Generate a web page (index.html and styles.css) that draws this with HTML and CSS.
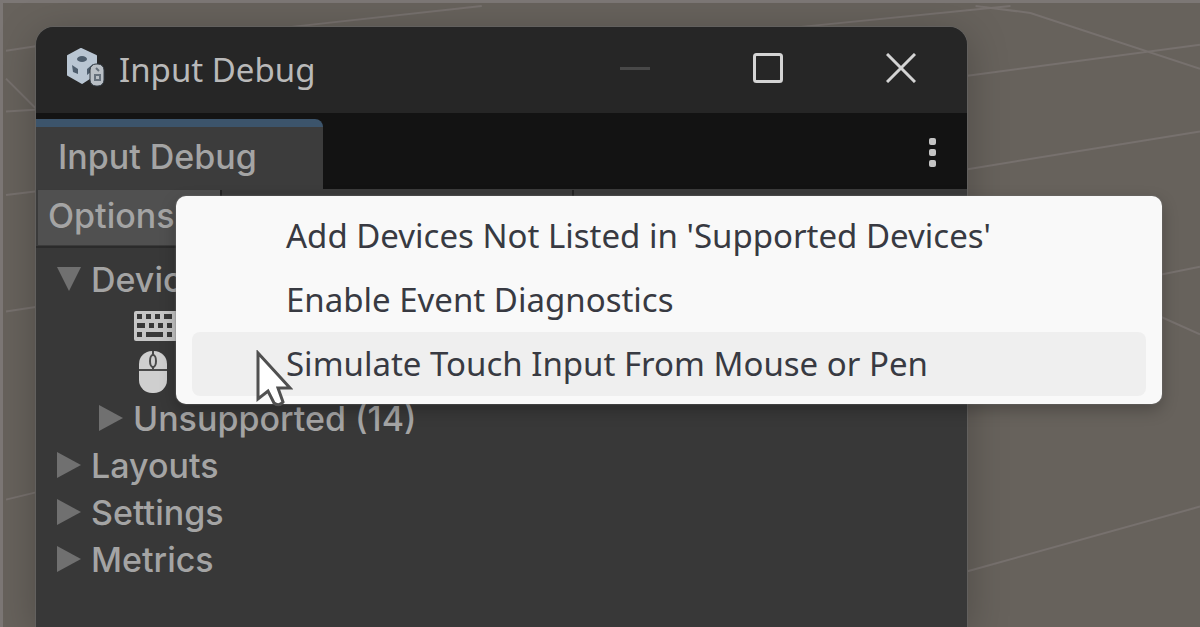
FILE: index.html
```
<!DOCTYPE html>
<html lang="en">
<head>
    <meta charset="UTF-8">
    <meta name="viewport" content="width=device-width, initial-scale=1.0">
    <title>Input Debug</title>
    <link rel="stylesheet" href="styles.css">
</head>
<body>
    <!-- scene grid behind the window -->
    <svg class="scene" viewBox="0 0 1200 627" preserveAspectRatio="none" aria-hidden="true">
        <path d="M280 25L480 3M790 25L1010 3M975 3L1030 10L1200 66M967 73L1200 42M967 167L1200 129M1160 273L1200 265M1160 315L1200 333M967 571L1200 506"/>
        <path d="M3 48L36 43M3 76L36 109M3 109L36 107M3 193L36 189M3 310L36 305M3 499L36 491"/>
    </svg>

    <main class="window">
        <header class="titlebar">
            <svg class="logo" viewBox="0 0 44 44" aria-hidden="true">
                <path class="cube" d="M18 3L33 10V28L19 37L5 29V10Z"/>
                <ellipse class="hole" cx="19" cy="13" rx="5" ry="3"/>
                <path class="hole" d="M9 19L15 23V28L10 26ZM30 18L24 23V29L29 25Z"/>
                <rect class="bug" x="27" y="18" width="14" height="22" rx="6"/>
                <path class="bugline" d="M33 22l3 3M32 29h5v5h-5z"/>
            </svg>
            <h1>Input Debug</h1>
            <div class="controls">
                <button aria-label="Minimize" disabled><svg viewBox="0 0 30 30"><path d="M0 15.500H30"/></svg></button>
                <button aria-label="Maximize"><svg viewBox="0 0 30 30"><rect x="1.500" y="1.500" width="27" height="27" rx="2"/></svg></button>
                <button aria-label="Close"><svg viewBox="0 0 30 30"><path d="M1 1L29 29M29 1L1 29"/></svg></button>
            </div>
        </header>

        <div class="tabs" role="tablist">
            <button class="tab" role="tab" aria-selected="true">Input Debug</button>
            <button class="more" aria-label="More">
                <svg viewBox="0 0 8 32"><rect y="2" width="7" height="7" rx="2"/><rect y="13" width="7" height="7" rx="2"/><rect y="24" width="7" height="7" rx="2"/></svg>
            </button>
        </div>

        <div class="toolbar">
            <button class="options" aria-haspopup="menu" aria-expanded="true">Options</button>
            <div class="field"></div>
        </div>

        <div class="menu" role="menu">
            <button role="menuitem">Add Devices Not Listed in 'Supported Devices'</button>
            <button role="menuitem">Enable Event Diagnostics</button>
            <button class="active" role="menuitem">Simulate Touch Input From Mouse or Pen</button>
            <svg class="cursor" viewBox="0 0 38 58" aria-hidden="true">
                <path d="M3 3V49L13 41L19 53Q24 57 28 52L23 38H35Z"/>
            </svg>
        </div>

        <ul class="tree">
            <li><svg class="arrow" viewBox="0 0 24 26"><path d="M0 1H24L12 25Z"/></svg>Devices
                <ul>
                    <li class="device">
                        <svg class="keyboard" viewBox="0 0 48 30" role="img" aria-label="Keyboard">
                            <rect width="48" height="30" rx="2"/>
                            <path d="M3 3h5v5h-5zM12 3h5v5h-5zM21 3h5v5h-5zM30 3h8v5h-8zM3 12h8v5h-8zM15 12h5v5h-5zM24 12h5v5h-5zM33 12h5v5h-5zM3 21h5v5h-5zM12 21h17v5h-17zM33 21h5v5h-5z"/>
                        </svg>
                    </li>
                    <li class="device">
                        <svg class="mouse" viewBox="0 0 28 42" role="img" aria-label="Mouse">
                            <rect width="28" height="42" rx="13"/>
                            <path d="M0 19H28M14 0V5M14 14V19"/>
                            <ellipse cx="14" cy="10" rx="3" ry="6"/>
                        </svg>
                    </li>
                    <li><svg class="arrow" viewBox="0 0 24 26"><path d="M0 0L24 13L0 26Z"/></svg>Unsupported (14)</li>
                </ul>
            </li>
            <li><svg class="arrow" viewBox="0 0 24 26"><path d="M0 0L24 13L0 26Z"/></svg>Layouts</li>
            <li><svg class="arrow" viewBox="0 0 24 26"><path d="M0 0L24 13L0 26Z"/></svg>Settings</li>
            <li><svg class="arrow" viewBox="0 0 24 26"><path d="M0 0L24 13L0 26Z"/></svg>Metrics</li>
        </ul>
    </main>
</body>
</html>
```
FILE: styles.css
```
* {box-sizing: border-box;}
body {
    margin: 0;
    min-height: 100vh;
    display: flex;
    padding: 27px 233px 0 36px;
    overflow: hidden;
    background: #67625c;
    font-family: Inter, sans-serif;
    color: #a4a4a4;
}
button {border: 0; padding: 0; background: none; color: inherit; font: inherit; text-align: left;}
svg {display: block; flex: none;}
ul {list-style: none; margin: 0; padding: 0;}

.scene {position: absolute; inset: 0; width: 100%; height: 100%; border-top: 3px solid #7c7775; border-left: 3px solid #7c7775;}
.scene path {fill: none; stroke: #77716e; stroke-width: 2;}

.window {
    position: relative;
    flex: 1;
    background: #383838;
    border-radius: 18px 18px 0 0;
    box-shadow: 0 0 0 1px #62605e, 0 8px 40px rgba(0, 0, 0, 0.25);
}

/* Title bar */
.titlebar {
    display: flex;
    align-items: center;
    height: 86px;
    padding: 0 51px 5px 27px;
    background: #262626;
    border-radius: 18px 18px 0 0;
}
.logo {width: 44px; height: 44px;}
.logo .cube {fill: #b9c6d3; stroke: #b9c6d3; stroke-width: 2; stroke-linejoin: round;}
.logo .hole {fill: #4d5d6d;}
.logo .bug {fill: #b9bfc5; stroke: #303840; stroke-width: 1;}
.logo .bugline {fill: none; stroke: #66717c; stroke-width: 2;}
h1 {flex: 1; margin: 0 0 0 12px; padding-top: 4px; font: 400 33px/44px "Noto Sans", sans-serif; color: #b9b9b9;}
.controls {display: flex; gap: 103px;}
.controls svg {width: 30px; height: 30px; fill: none; stroke: #d4d4d4; stroke-width: 3;}
.controls button:disabled svg {stroke: #484848;}

/* Tab strip */
.tabs {display: flex; justify-content: space-between; height: 76px; padding-top: 6px; background: #131313;}
.tab {
    width: 287px;
    padding: 0 22px 4px;
    background: #3c3c3c;
    border-top: 8px solid #3c546b;
    border-radius: 0 8px 0 0;
    font-size: 34px;
    font-weight: 500;
}
.more {padding: 0 30px 4px;}
.more svg {width: 8px; height: 32px; fill: #c4c4c4;}

/* Toolbar */
.toolbar {display: flex; height: 59px; padding: 1px 2px; background: #3b3b3b; border-bottom: 2px solid #2b2b2b;}
.options {width: 184px; padding: 0 10px 4px; background: #505050; border-right: 2px solid #242424; font-size: 34px; font-weight: 500;}
.field {width: 352px; border-right: 2px solid #242424;}

/* Device tree */
.tree {padding: 8px 0 0 21px; font-size: 34px; font-weight: 500; line-height: 47px;}
.tree ul {padding-left: 42px;}
.tree .arrow {float: left; width: 24px; height: 26px; margin: 10px 10px 10px 0; fill: #707070;}
.device {display: flex; align-items: center; height: 46px; padding-left: 35px;}
.keyboard {width: 48px; height: 30px; fill: #c6c6c6;}
.keyboard path {fill: #383838;}
.mouse {width: 28px; height: 42px; margin-left: 5px; fill: #cfcfcf;}
.mouse path, .mouse ellipse {stroke: #4a4a4a; stroke-width: 2;}

/* Options menu */
.menu {
    position: absolute;
    top: 169px;
    left: 140px;
    right: -195px;
    padding: 8px 16px;
    background: #f9f9f9;
    border-radius: 10px;
    box-shadow: 0 0 2px #777777, 0 6px 16px rgba(0, 0, 0, 0.25);
}
.menu button {
    display: block;
    width: 100%;
    height: 64px;
    padding: 0 94px;
    border-radius: 8px;
    font: 400 33px/64px "Noto Sans", sans-serif;
    color: #383a42;
    white-space: nowrap;
}
.menu .active {background: #efefef;}
.cursor {position: absolute; left: 79px; top: 154px; width: 38px; height: 58px; fill: #ffffff; stroke: #505050; stroke-width: 3;}
```
